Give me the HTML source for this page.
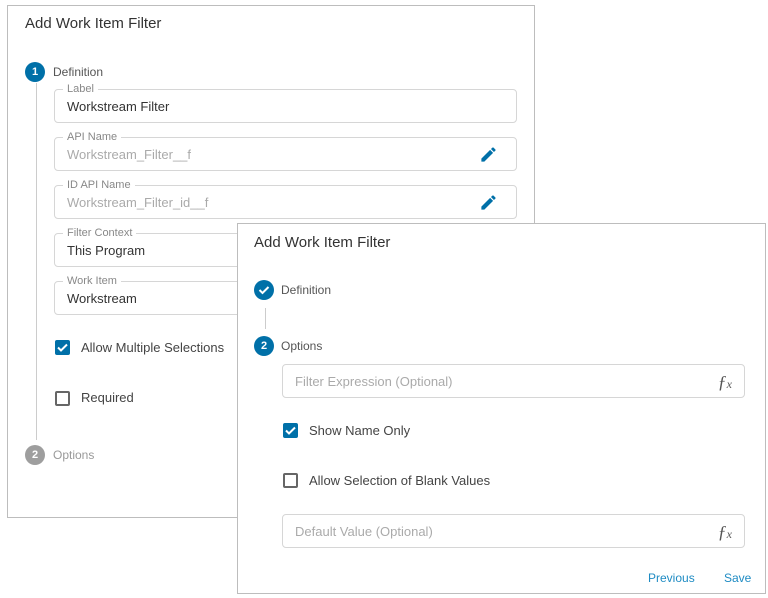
<!DOCTYPE html><html><head><style>
*{box-sizing:border-box;margin:0;padding:0}
body{width:768px;height:598px;background:#fff;position:relative;font-family:"Liberation Sans",sans-serif;overflow:hidden}
.p{position:absolute;background:#fff;border:1px solid #bdbdbd}
.a{position:absolute}
.t{font-size:15px;color:#333}
.f{position:absolute;border:1px solid #d6d6d6;border-radius:4px;height:34px}
.lg{position:absolute;top:-8px;left:8px;background:#fff;padding:0 4px;font-size:11px;color:#888;line-height:14px}
.v{position:absolute;left:12px;top:9px;font-size:13px;color:#333}
.g{color:#aaa}
.c{position:absolute;width:20px;height:20px;border-radius:50%;background:#0070a8;color:#fff;font-size:11px;text-align:center;line-height:20px;font-weight:bold}
.s{font-size:12px;color:#555;position:absolute}
.cb{position:absolute;width:15px;height:15px;border-radius:2px}
.on{background:#0070a8}
.off{border:2px solid #666}
.l{position:absolute;font-size:13px;color:#444}
.fx{position:absolute;right:12px;top:7px;font-family:"Liberation Serif",serif;font-style:italic;font-size:18px;color:#555}
</style></head><body>
<div class="p" style="left:7px;top:5px;width:528px;height:513px">
<div class="a t" style="left:17px;top:9px">Add Work Item Filter</div>
<div class="c" style="left:17px;top:56px">1</div>
<div class="s" style="left:45px;top:59px">Definition</div>
<div class="a" style="left:28px;top:77px;width:1px;height:357px;background:#ccc"></div>
<div class="f" style="left:46px;top:83px;width:463px"><span class="lg">Label</span><span class="v">Workstream Filter</span></div>
<div class="f" style="left:46px;top:131px;width:463px"><span class="lg">API Name</span><span class="v g">Workstream_Filter__f</span>
<svg class="a" style="right:18px;top:7px" width="19" height="19" viewBox="0 0 24 24"><path fill="#0070a8" d="M3 17.25V21h3.75L17.8 9.94l-3.75-3.75L3 17.25zM20.7 7.04a1 1 0 000-1.41l-2.34-2.34a1 1 0 00-1.41 0l-1.83 1.83 3.75 3.75 1.83-1.83z"/></svg></div>
<div class="f" style="left:46px;top:179px;width:463px"><span class="lg">ID API Name</span><span class="v g">Workstream_Filter_id__f</span>
<svg class="a" style="right:18px;top:7px" width="19" height="19" viewBox="0 0 24 24"><path fill="#0070a8" d="M3 17.25V21h3.75L17.8 9.94l-3.75-3.75L3 17.25zM20.7 7.04a1 1 0 000-1.41l-2.34-2.34a1 1 0 00-1.41 0l-1.83 1.83 3.75 3.75 1.83-1.83z"/></svg></div>
<div class="f" style="left:46px;top:227px;width:463px"><span class="lg">Filter Context</span><span class="v">This Program</span></div>
<div class="f" style="left:46px;top:275px;width:463px"><span class="lg">Work Item</span><span class="v">Workstream</span></div>
<div class="cb on" style="left:47px;top:334px"><svg width="15" height="15"><path d="M3 7.5l3 3 6-6" stroke="#fff" stroke-width="2" fill="none"/></svg></div>
<div class="l" style="left:73px;top:334px">Allow Multiple Selections</div>
<div class="cb off" style="left:47px;top:385px"></div>
<div class="l" style="left:73px;top:384px">Required</div>
<div class="c" style="left:17px;top:439px;background:#9e9e9e">2</div>
<div class="s" style="left:45px;top:442px;color:#999">Options</div>
</div>
<div class="p" style="left:237px;top:223px;width:529px;height:371px">
<div class="a t" style="left:16px;top:10px">Add Work Item Filter</div>
<div class="c" style="left:16px;top:56px"><svg width="20" height="20"><path d="M5.5 10l3 3 6-6" stroke="#fff" stroke-width="2" fill="none"/></svg></div>
<div class="s" style="left:43px;top:59px">Definition</div>
<div class="a" style="left:27px;top:84px;width:1px;height:21px;background:#ccc"></div>
<div class="c" style="left:16px;top:112px">2</div>
<div class="s" style="left:43px;top:115px">Options</div>
<div class="f" style="left:44px;top:140px;width:463px"><span class="v g">Filter Expression (Optional)</span><span class="fx">ƒ<span style="font-size:12px">x</span></span></div>
<div class="cb on" style="left:45px;top:199px"><svg width="15" height="15"><path d="M3 7.5l3 3 6-6" stroke="#fff" stroke-width="2" fill="none"/></svg></div>
<div class="l" style="left:71px;top:199px">Show Name Only</div>
<div class="cb off" style="left:45px;top:249px"></div>
<div class="l" style="left:71px;top:249px">Allow Selection of Blank Values</div>
<div class="f" style="left:44px;top:290px;width:463px"><span class="v g">Default Value (Optional)</span><span class="fx">ƒ<span style="font-size:12px">x</span></span></div>
<div class="a" style="left:410px;top:347px;font-size:12px;color:#1e8bc3">Previous</div>
<div class="a" style="left:486px;top:347px;font-size:12px;color:#1e8bc3">Save</div>
</div>
</body></html>
